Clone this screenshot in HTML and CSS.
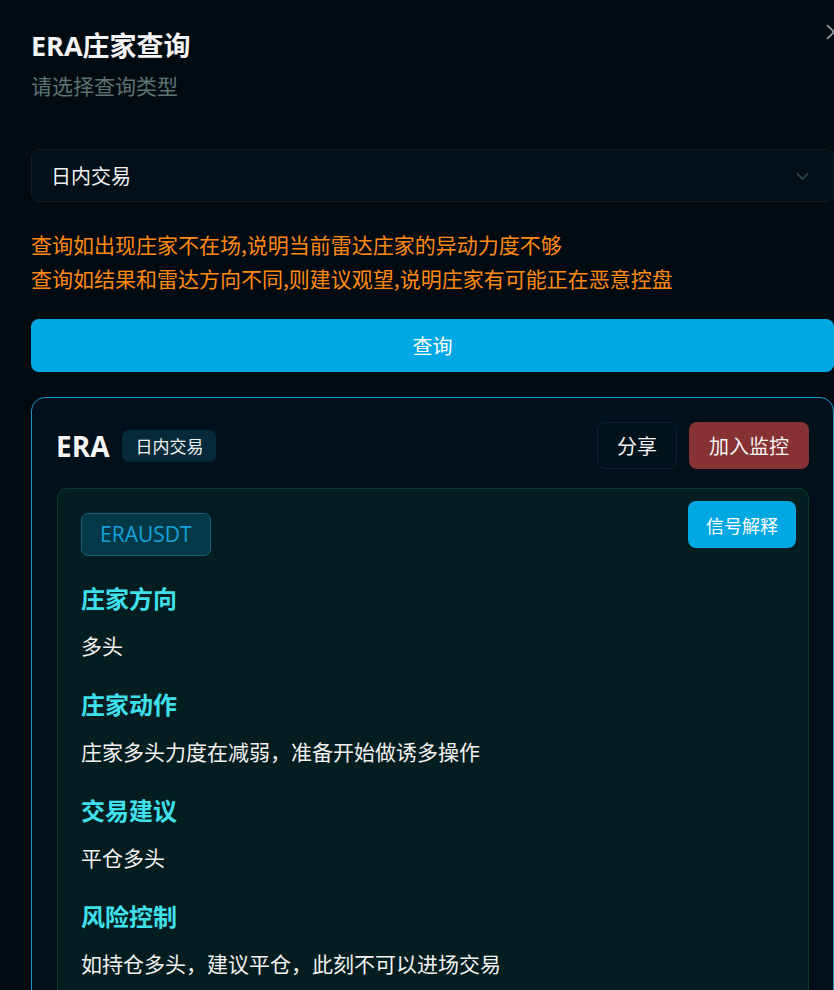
FILE: index.html
```html
<!DOCTYPE html>
<html lang="zh-CN">
<head>
<meta charset="utf-8">
<title>ERA庄家查询</title>
<link rel="stylesheet" href="styles.css">
</head>
<body>
<div class="dialog">
  <button class="close" aria-label="关闭">
    <svg width="16" height="16" viewBox="0 0 16 16"><path d="M1 1 L15 15 M15 1 L1 15" stroke="#9aa3a8" stroke-width="1.6" fill="none"/></svg>
  </button>
  <h1 class="title">ERA庄家查询</h1>
  <p class="subtitle">请选择查询类型</p>

  <div class="select">
    <span>日内交易</span>
    <svg class="chev" width="13" height="9" viewBox="0 0 13 9"><path d="M1 1.5 L6.5 7 L12 1.5" stroke="#2a4d52" stroke-width="1.7" fill="none"/></svg>
  </div>

  <div class="notice">
    <p>查询如出现庄家不在场,说明当前雷达庄家的异动力度不够</p>
    <p>查询如结果和雷达方向不同,则建议观望,说明庄家有可能正在恶意控盘</p>
  </div>

  <button class="query">查询</button>

  <div class="card">
    <div class="card-head">
      <div class="head-left">
        <span class="coin">ERA</span>
        <span class="type-tag">日内交易</span>
      </div>
      <div class="head-right">
        <button class="btn share">分享</button>
        <button class="btn monitor">加入监控</button>
      </div>
    </div>

    <div class="panel">
      <button class="explain">信号解释</button>
      <span class="pair">ERAUSDT</span>

      <div class="section">
        <h3>庄家方向</h3>
        <p>多头</p>
      </div>
      <div class="section">
        <h3>庄家动作</h3>
        <p>庄家多头力度在减弱，准备开始做诱多操作</p>
      </div>
      <div class="section">
        <h3>交易建议</h3>
        <p>平仓多头</p>
      </div>
      <div class="section">
        <h3>风险控制</h3>
        <p>如持仓多头，建议平仓，此刻不可以进场交易</p>
      </div>
    </div>
  </div>
</div>
</body>
</html>
```

FILE: styles.css
```css
html, body {
  margin: 0;
  padding: 0;
  overflow: hidden;
  background: #020a12;
}
body {
  font-family: "Open Sans", "Noto Sans CJK SC", sans-serif;
  color: #f2f2f2;
}
.dialog {
  position: relative;
  padding: 28px 0 40px 31px;
  width: 803px;
}
.close {
  position: absolute;
  left: 826px;
  top: 24px;
  background: none;
  border: none;
  padding: 0;
  width: 16px;
  height: 16px;
}
.title {
  margin: 0;
  font-size: 27px;
  line-height: 36px;
  font-weight: 700;
  color: #f4f4f4;
}
.subtitle {
  margin: 6px 0 0;
  font-size: 21px;
  line-height: 30px;
  color: #5b7472;
  font-family: "Noto Sans CJK SC", sans-serif;
}
.select {
  margin-top: 49px;
  height: 51px;
  border: 1px solid #0b1e2a;
  border-radius: 8px;
  background: #03101a;
  display: flex;
  align-items: center;
  justify-content: space-between;
  padding: 0 24px 0 19px;
  font-size: 20px;
  color: #f2f2f2;
  font-family: "Noto Sans CJK SC", sans-serif;
}
.chev { margin-top: 2px; }
.notice {
  margin-top: 25px;
}
.notice p {
  margin: 0;
  font-size: 21px;
  line-height: 34px;
  color: #ff8a12;
  font-family: "Noto Sans CJK SC", sans-serif;
}
.query {
  display: block;
  margin-top: 24px;
  width: 100%;
  height: 53px;
  border: none;
  border-radius: 8px;
  background: #00a8e3;
  color: #ffffff;
  font-family: "Noto Sans CJK SC", sans-serif;
  font-size: 20px;
}
.card {
  margin-top: 25px;
  border: 1px solid #1b94c8;
  border-radius: 14px;
  background: #01101a;
  padding: 24px 24px 0 25px;
}
.card-head {
  display: flex;
  align-items: center;
  justify-content: space-between;
  height: 47px;
}
.head-left {
  display: flex;
  align-items: center;
  gap: 13px;
}
.coin {
  font-size: 28px;
  font-weight: 700;
  color: #f4f4f4;
  line-height: 36px;
  margin-left: -1px;
}
.type-tag {
  background: #062a39;
  border-radius: 7px;
  padding: 0 13px;
  height: 32px;
  line-height: 32px;
  font-size: 17px;
  color: #eef2f2;
  font-family: "Noto Sans CJK SC", sans-serif;
}
.head-right {
  display: flex;
  gap: 12px;
}
.btn {
  height: 47px;
  padding: 0 20px;
  border-radius: 8px;
  font-family: "Noto Sans CJK SC", sans-serif;
  font-size: 20px;
  color: #f4f4f4;
}
.share {
  background: #02121c;
  border: 1px solid #0b2230;
  padding: 0 19px;
}
.monitor {
  background: #863134;
  border: none;
}
.panel {
  position: relative;
  margin-top: 19px;
  background: #041d20;
  border: 1px solid #0b3a2a;
  border-radius: 10px;
  padding: 24px 24px 30px 23px;
}
.explain {
  position: absolute;
  top: 12px;
  right: 12px;
  height: 47px;
  padding: 0 18px;
  border: none;
  border-radius: 8px;
  background: #00a8e3;
  color: #ffffff;
  font-family: "Noto Sans CJK SC", sans-serif;
  font-size: 18px;
}
.pair {
  display: inline-block;
  height: 41px;
  line-height: 41px;
  padding: 0 18px;
  border: 1px solid #14617a;
  border-radius: 7px;
  background: #033947;
  color: #14a2da;
  font-size: 21px;
}
.section {
  margin-top: 26px;
}
.section + .section {
  margin-top: 28px;
}
.section h3 {
  margin: 0;
  font-size: 24px;
  line-height: 32px;
  font-weight: 700;
  color: #3fe0ec;
  font-family: "Noto Sans CJK SC", sans-serif;
}
.section p {
  margin: 16px 0 0;
  font-size: 21px;
  line-height: 30px;
  color: #f2f2f2;
  font-family: "Noto Sans CJK SC", sans-serif;
}
```
